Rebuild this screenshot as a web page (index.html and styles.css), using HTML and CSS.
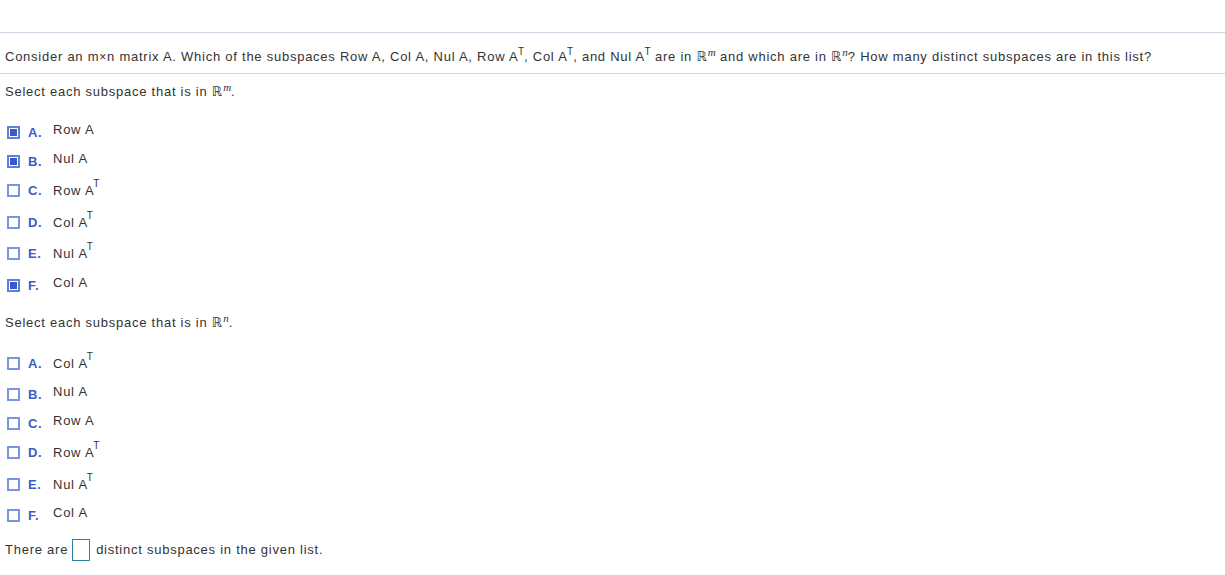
FILE: index.html
```html
<!DOCTYPE html>
<html>
<head>
<meta charset="utf-8">
<link rel="stylesheet" href="styles.css">
</head>
<body>
<div class="page">
  <div class="question">Consider an m<span class="times">×</span>n matrix A. Which of the subspaces Row A, Col A, Nul A, Row A<sup class="qs">T</sup>, Col A<sup class="qs">T</sup>, and Nul A<sup class="qs">T</sup> are in <span class="bb">ℝ</span><sup class="ms">m</sup> and which are in <span class="bb">ℝ</span><sup class="ms">n</sup>? How many distinct subspaces are in this list?</div>

  <div class="prompt">Select each subspace that is in <span class="bb">ℝ</span><sup class="ms">m</sup>.</div>
  <div class="options">
    <div class="opt"><span class="cb checked"></span><span class="lbl">A.</span><span class="txt">Row A</span></div>
    <div class="opt"><span class="cb checked"></span><span class="lbl">B.</span><span class="txt">Nul A</span></div>
    <div class="opt"><span class="cb"></span><span class="lbl">C.</span><span class="txt">Row A<sup class="os">T</sup></span></div>
    <div class="opt"><span class="cb"></span><span class="lbl">D.</span><span class="txt">Col A<sup class="os">T</sup></span></div>
    <div class="opt"><span class="cb"></span><span class="lbl">E.</span><span class="txt">Nul A<sup class="os">T</sup></span></div>
    <div class="opt"><span class="cb checked"></span><span class="lbl">F.</span><span class="txt">Col A</span></div>
  </div>

  <div class="prompt">Select each subspace that is in <span class="bb">ℝ</span><sup class="ms">n</sup>.</div>
  <div class="options options-last">
    <div class="opt"><span class="cb"></span><span class="lbl">A.</span><span class="txt">Col A<sup class="os">T</sup></span></div>
    <div class="opt"><span class="cb"></span><span class="lbl">B.</span><span class="txt">Nul A</span></div>
    <div class="opt"><span class="cb"></span><span class="lbl">C.</span><span class="txt">Row A</span></div>
    <div class="opt"><span class="cb"></span><span class="lbl">D.</span><span class="txt">Row A<sup class="os">T</sup></span></div>
    <div class="opt"><span class="cb"></span><span class="lbl">E.</span><span class="txt">Nul A<sup class="os">T</sup></span></div>
    <div class="opt"><span class="cb"></span><span class="lbl">F.</span><span class="txt">Col A</span></div>
  </div>

  <div class="answer"><span>There are</span><span class="box"></span><span>distinct subspaces in the given list.</span></div>
</div>
</body>
</html>
```

FILE: styles.css
```css
html, body {
  margin: 0;
  padding: 0;
  background: #ffffff;
}
body {
  font-family: "Liberation Sans", Arial, sans-serif;
  font-size: 13px;
  line-height: 16px;
  letter-spacing: 0.75px;
  color: #333333;
}
.page {
  padding: 32px 0 0 5px;
}
.question {
  margin-left: -5px;
  padding: 16px 0 8px 5px;
  border-top: 1px solid #cdd3e2;
  border-bottom: 1px solid #cdd3e2;
}
.times {
  font-size: 12px;
}
.qs {
  font-size: 10px;
  line-height: 0;
  vertical-align: 6.5px;
  letter-spacing: 0;
  margin-left: -0.5px;
}
.bb {
  font-family: "DejaVu Sans", sans-serif;
  font-size: 13px;
  letter-spacing: 0;
}
.ms {
  font-family: "Liberation Serif", serif;
  font-style: italic;
  font-size: 11px;
  line-height: 0;
  vertical-align: 5px;
  letter-spacing: 0;
  margin-left: 1px;
}
.prompt {
  padding-top: 10px;
}
.options {
  padding: 18px 0 5px 0;
}
.options-last {
  padding-bottom: 9px;
}
.opt {
  display: flex;
  align-items: flex-start;
  padding: 0 0 6px 0;
}
.cb {
  box-sizing: border-box;
  width: 13px;
  height: 13px;
  margin: 8px 0 0 2px;
  border: 2px solid #7a95dd;
  background: #fff;
  display: flex;
  align-items: center;
  justify-content: center;
  flex: none;
}
.cb.checked {
  border-color: #5f7fd8;
}
.cb.checked::after {
  content: "";
  width: 7px;
  height: 7px;
  background: #3a58c8;
}
.lbl {
  width: 25px;
  margin-left: 8px;
  margin-top: 7px;
  font-weight: bold;
  letter-spacing: 0.5px;
  color: #3d5bc5;
  flex: none;
}
.txt {
  line-height: 16px;
  padding: 4px 0 3px 0;
}
.os {
  font-size: 10px;
  line-height: 7px;
  vertical-align: 7.5px;
  letter-spacing: 0;
  margin-left: -1px;
}
.answer {
  display: flex;
  align-items: center;
}
.box {
  box-sizing: border-box;
  width: 18px;
  height: 22px;
  margin: 0 6px 0 4px;
  border: 1.5px solid #2a83a3;
  background: #fff;
}
```
